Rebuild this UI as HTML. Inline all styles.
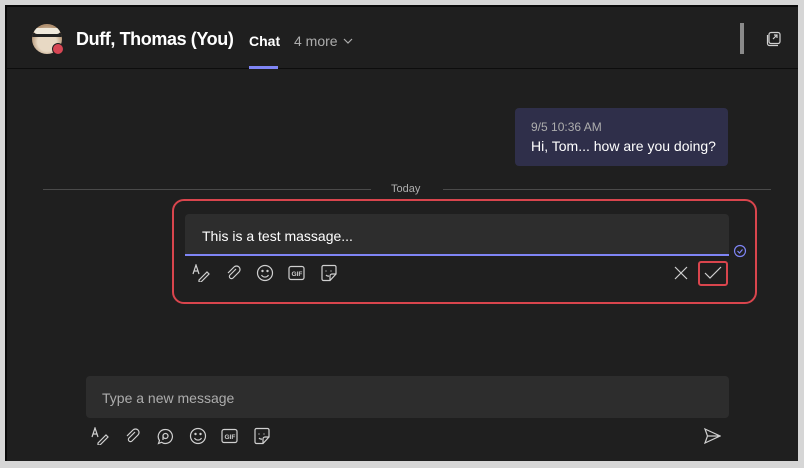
<!DOCTYPE html>
<html><head><meta charset="utf-8"><style>
*{margin:0;padding:0;box-sizing:border-box}
body{width:804px;height:468px;background:#d6d6d6;font-family:"Liberation Sans",sans-serif;position:relative;overflow:hidden}
.win{position:absolute;left:5px;top:5px;width:793px;height:456px;background:#1f1f1f;border:2px solid #0a0a0a;border-right:none;border-bottom:none}
.abs{position:absolute}
.ic{position:absolute;stroke:#d0d0d0;fill:none;stroke-width:1.2}
</style></head><body>
<div class="win"></div>
<div class="abs" style="left:7px;top:68px;width:791px;height:1px;background:#0d0d0d"></div>
<div class="abs" style="left:32px;top:24px;width:30px;height:30px;border-radius:50%;background:radial-gradient(circle at 50% 60%,#e8d9c4 0 40%,#b09070 70%);overflow:hidden">
<div style="position:absolute;left:0;top:9px;width:30px;height:4px;background:#222"></div>
<div style="position:absolute;left:2px;top:4px;width:26px;height:6px;background:#efe9dc;border-radius:4px"></div></div>
<div class="abs" style="left:52px;top:43px;width:12px;height:12px;border-radius:50%;background:#d74654;border:1.5px solid #1f1f1f"></div>
<div class="abs" style="left:76px;top:29px;font-size:18px;font-weight:bold;color:#fff;letter-spacing:-0.4px">Duff, Thomas (You)</div>
<div class="abs" style="left:249px;top:33px;font-size:14px;font-weight:bold;color:#fff">Chat</div>
<div class="abs" style="left:249px;top:66px;width:29px;height:3px;background:#7f85f5"></div>
<div class="abs" style="left:294px;top:33px;font-size:14px;color:#adadad">4 more</div>
<svg class="ic" style="left:343px;top:37px;stroke:#adadad" width="10" height="8"><path d="M1 2l4 4 4-4"/></svg>
<div class="abs" style="left:740px;top:23px;width:4px;height:31px;background:#8a8a8a"></div>
<svg class="ic" style="left:766px;top:31px" width="16" height="16"><rect x="3" y="1.5" width="11" height="11" rx="2"/><path d="M1.5 4v8.5a2 2 0 0 0 2 2H12M7 8l4-4M8 4h3v3"/></svg>
<div class="abs" style="left:515px;top:108px;width:213px;height:58px;background:#2f2f4a;border-radius:4px"></div>
<div class="abs" style="left:531px;top:120px;font-size:12px;color:#adadad">9/5 10:36 AM</div>
<div class="abs" style="left:531px;top:138px;font-size:14px;color:#fff">Hi, Tom... how are you doing?</div>
<div class="abs" style="left:43px;top:189px;width:328px;height:1px;background:#4a4a4a"></div>
<div class="abs" style="left:443px;top:189px;width:328px;height:1px;background:#4a4a4a"></div>
<div class="abs" style="left:391px;top:183px;font-size:11px;color:#adadad">Today</div>
<div class="abs" style="left:172px;top:199px;width:585px;height:105px;border:2.5px solid #d9454d;border-radius:12px"></div>
<div class="abs" style="left:185px;top:214px;width:544px;height:42px;background:#2d2d2d;border-radius:4px 4px 0 0;border-bottom:2px solid #7f85f5"></div>
<div class="abs" style="left:202px;top:228px;font-size:14px;color:#fff">This is a test massage...</div>
<svg class="ic" style="left:733px;top:244px;stroke:#7f85f5" width="14" height="14"><circle cx="7" cy="7" r="5.5"/><path d="M4.5 7l2 2 3-3.5"/></svg>
<svg class="ic" style="left:192px;top:264px" width="20" height="18"><path d="M1 10l3-9 3 9M2.2 7h3.6M7 16l8-8 2 2-8 8H7z"/></svg>
<svg class="ic" style="left:225px;top:265px" width="16" height="16"><path d="M11 4l-6 6a2 2 0 0 0 3 3l6-6a3.5 3.5 0 0 0-5-5L3 8"/></svg>
<svg class="ic" style="left:256px;top:264px" width="18" height="18"><circle cx="9" cy="9" r="7.5"/><circle cx="6.5" cy="7" r=".6"/><circle cx="11.5" cy="7" r=".6"/><path d="M5.5 11a4 4 0 0 0 7 0"/></svg>
<svg class="ic" style="left:288px;top:265px" width="18" height="16"><rect x="1" y="1.5" width="15" height="13" rx="2"/><text x="3.5" y="11" font-size="6.5" fill="#d0d0d0" stroke="none" font-family="Liberation Sans" font-weight="bold">GIF</text></svg>
<svg class="ic" style="left:320px;top:264px" width="18" height="18"><path d="M2 3a1.5 1.5 0 0 1 1.5-1.5h11A1.5 1.5 0 0 1 16 3v7l-6 6.5H3.5A1.5 1.5 0 0 1 2 15zM10 16.5V12a2 2 0 0 1 2-2h4M6 6.5v1M11 6.5v1M6 11a3 3 0 0 0 3 1"/></svg>
<svg class="ic" style="left:674px;top:266px" width="14" height="14"><path d="M1 1l12 12M13 1L1 13"/></svg>
<div class="abs" style="left:698px;top:261px;width:30px;height:25px;border:2.5px solid #d9454d;border-radius:3px"></div>
<svg class="ic" style="left:704px;top:266px" width="18" height="14"><path d="M1 7l5 5L17 1"/></svg>
<div class="abs" style="left:86px;top:376px;width:643px;height:42px;background:#2d2d2d;border-radius:4px"></div>
<div class="abs" style="left:102px;top:390px;font-size:14px;color:#adadad">Type a new message</div>
<svg class="ic" style="left:91px;top:427px" width="20" height="18"><path d="M1 10l3-9 3 9M2.2 7h3.6M7 16l8-8 2 2-8 8H7z"/></svg>
<svg class="ic" style="left:124px;top:428px" width="16" height="16"><path d="M11 4l-6 6a2 2 0 0 0 3 3l6-6a3.5 3.5 0 0 0-5-5L3 8"/></svg>
<svg class="ic" style="left:157px;top:428px" width="17" height="17"><path d="M8.5 1.5a7 7 0 1 1-4 12.8L1.5 15.5l1-3a7 7 0 0 1 6-11z"/><circle cx="8.5" cy="8" r="2.5"/><path d="M6 8v4"/></svg>
<svg class="ic" style="left:189px;top:427px" width="18" height="18"><circle cx="9" cy="9" r="7.5"/><circle cx="6.5" cy="7" r=".6"/><circle cx="11.5" cy="7" r=".6"/><path d="M5.5 11a4 4 0 0 0 7 0"/></svg>
<svg class="ic" style="left:221px;top:428px" width="18" height="16"><rect x="1" y="1.5" width="15" height="13" rx="2"/><text x="3.5" y="11" font-size="6.5" fill="#d0d0d0" stroke="none" font-family="Liberation Sans" font-weight="bold">GIF</text></svg>
<svg class="ic" style="left:253px;top:427px" width="18" height="18"><path d="M2 3a1.5 1.5 0 0 1 1.5-1.5h11A1.5 1.5 0 0 1 16 3v7l-6 6.5H3.5A1.5 1.5 0 0 1 2 15zM10 16.5V12a2 2 0 0 1 2-2h4M6 6.5v1M11 6.5v1M6 11a3 3 0 0 0 3 1"/></svg>
<svg class="ic" style="left:703px;top:427px" width="18" height="18"><path d="M2 2l15 7-15 7 2.5-7zM4.5 9H17"/></svg>
</body></html>
